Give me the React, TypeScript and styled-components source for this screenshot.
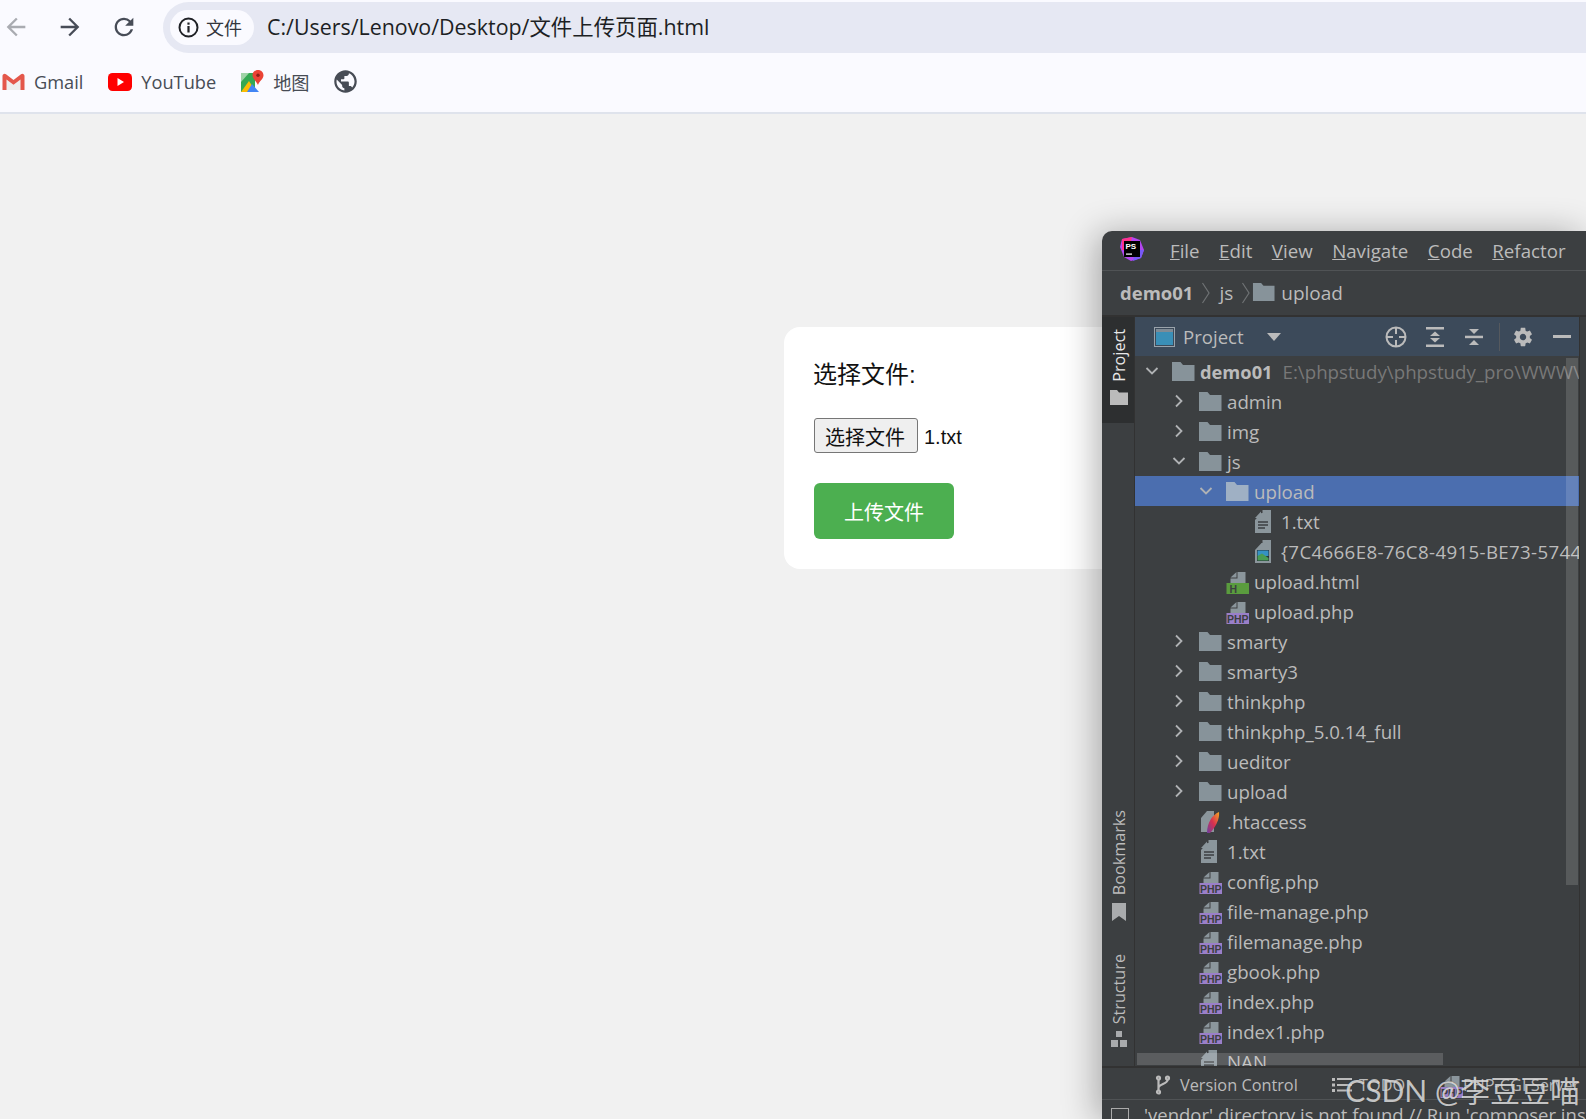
import React from 'react';
import styled, { createGlobalStyle } from 'styled-components';

const Global = createGlobalStyle`
  html, body { margin: 0; padding: 0; background: #f1f1f1; }
  body { width: 1586px; height: 1119px; overflow: hidden; font-family: "Open Sans", "Noto Sans CJK SC", sans-serif; }
  #root { height: 100%; }
`;

const Shell = styled.div`
  height: 1119px;
  display: flex;
  flex-direction: column;
  overflow: hidden;
`;

const BrowserBar = styled.header`
  height: 114px;
  flex: none;
  box-sizing: border-box;
  background: #fafaff;
  border-bottom: 2px solid #dfe3ec;
  display: flex;
  flex-direction: column;
`;

const NavRow = styled.div`
  height: 53px;
  padding: 1px 0 0 2px;
  box-sizing: border-box;
  display: flex;
  align-items: center;
  gap: 26px;
`;

const NavButton = styled.span<{ $color: string }>`
  width: 28px;
  height: 28px;
  margin-top: -1px;
  color: ${p => p.$color};
  display: flex;
  align-items: center;
  justify-content: center;
`;

const AddressPill = styled.div`
  flex: 1;
  height: 51px;
  margin-left: -1px;
  border-radius: 26px 0 0 26px;
  background: #e6e8f3;
  display: flex;
  align-items: center;
  padding-left: 7px;
`;

const SecurityChip = styled.div`
  width: 84px;
  height: 35px;
  box-sizing: border-box;
  padding-left: 8px;
  border-radius: 18px;
  background: #fafaff;
  display: flex;
  align-items: center;
  gap: 7px;
  font-size: 18px;
  color: #34373d;
`;

const Url = styled.span`
  margin: -3px 0 0 13px;
  font-size: 21.4px;
  color: #1d1f24;
`;

const BookmarkRow = styled.nav`
  flex: 1;
  display: flex;
  align-items: center;
  padding: 0 0 2px 2px;
  gap: 25px;
`;

const Bookmark = styled.span`
  display: flex;
  align-items: center;
  gap: 9px;
  font-size: 18.2px;
  color: #474c55;
`;

const GlobeSlot = styled.span`
  display: flex;
  margin-left: -3px;
`;

const PageArea = styled.main`
  flex: 1;
  position: relative;
  min-height: 0;
`;

const UploadCard = styled.section`
  width: 440px;
  margin: 213px 0 0 784px;
  box-sizing: border-box;
  padding: 30px;
  background: #fff;
  border-radius: 16px;
  font-family: "Liberation Sans", "Noto Sans CJK SC", sans-serif;
  color: #111;
`;

const FieldLabel = styled.div`
  font-size: 24px;
  line-height: 36px;
  margin-bottom: 25px;
  margin-left: -1px;
`;

const FileRow = styled.div`
  display: flex;
  align-items: center;
  height: 35px;
  margin-bottom: 30px;
  gap: 6px;
  font-size: 20px;
`;

const FileButton = styled.span`
  width: 104px;
  height: 35px;
  box-sizing: border-box;
  padding: 2px 2px 0 0;
  border: 1px solid #767676;
  border-radius: 3px;
  background: #efefef;
  display: flex;
  align-items: center;
  justify-content: center;
`;

const FileName = styled.span`
  padding-top: 3px;
`;

const SubmitButton = styled.span`
  width: 140px;
  height: 56px;
  border-radius: 6px;
  background: #4caf50;
  color: #fff;
  font-size: 20px;
  display: flex;
  align-items: center;
  justify-content: center;
`;

const IdeWindow = styled.div`
  position: absolute;
  left: 1102px;
  top: 117px;
  right: 0;
  bottom: 0;
  border-top-left-radius: 10px;
  background: #3c3f41;
  box-shadow: -6px 2px 34px rgba(0, 0, 0, 0.3);
  display: flex;
  flex-direction: column;
  overflow: hidden;
  color: #bbbbbb;
  font-family: "Open Sans", sans-serif;
`;

const MenuBar = styled.div`
  height: 40px;
  flex: none;
  box-sizing: border-box;
  border-bottom: 1px solid #505355;
  display: flex;
  align-items: center;
  padding-left: 17px;
  font-size: 18.7px;
  white-space: nowrap;
`;

const LogoSlot = styled.span`
  width: 26px;
  height: 26px;
  flex: none;
  margin-top: -3px;
`;

const MenuList = styled.div`
  display: flex;
  gap: 19.5px;
  margin-left: 25px;
`;

const MenuItem = styled.span`
  &::first-letter { text-decoration: underline; }
`;

const Crumbs = styled.div`
  height: 46px;
  flex: none;
  box-sizing: border-box;
  border-bottom: 2px solid #323232;
  display: flex;
  align-items: center;
  padding-left: 18px;
  font-size: 19px;
`;

const CrumbStrong = styled.strong`
  font-size: 18.5px;
  font-weight: 700;
  margin-top: -1px;
`;

const CrumbSep = styled.span<{ $tight?: boolean }>`
  margin: 0 ${p => (p.$tight ? '1px' : '8px')} 0 8px;
  display: flex;
  color: #6f7274;
`;

const CrumbFolder = styled.span`
  display: flex;
  margin-right: 6px;
  margin-top: -4px;
`;

const MainRow = styled.div`
  flex: 1;
  min-height: 0;
  display: flex;
`;

const ToolStrip = styled.aside`
  width: 33px;
  flex: none;
  box-sizing: border-box;
  border-right: 1px solid #323232;
  display: flex;
  flex-direction: column;
  align-items: center;
  padding-bottom: 19px;
`;

const StripTab = styled.div<{ $active?: boolean; $push?: boolean }>`
  width: 100%;
  display: flex;
  flex-direction: column;
  align-items: center;
  gap: 7px;
  box-sizing: border-box;
  background: ${p => (p.$active ? '#2d2f30' : 'transparent')};
  color: ${p => (p.$active ? '#e8e8e8' : '#bbbbbb')};
  padding: ${p => (p.$active ? '12px 0 18px 2px' : '0 0 0 2px')};
  margin-top: ${p => (p.$push ? 'auto' : '0')};
`;

const StripLabel = styled.span`
  writing-mode: vertical-rl;
  transform: rotate(180deg);
  font-size: 16.2px;
  line-height: 20px;
`;

const StripGap = styled.div`
  height: 33px;
  flex: none;
`;

const ProjectPanel = styled.section`
  flex: 1;
  min-width: 0;
  position: relative;
  display: flex;
  flex-direction: column;
  overflow: hidden;
`;

const PanelHead = styled.div`
  height: 39px;
  flex: none;
  background: #3c4a5a;
  display: flex;
  align-items: center;
  padding-left: 19px;
  font-size: 18.6px;
`;

const ProjectGlyph = styled.span`
  width: 21px;
  height: 20px;
  flex: none;
`;

const HeadTitle = styled.span`
  margin: -1px 0 0 8px;
`;

const HeadCaret = styled.span`
  width: 0;
  height: 0;
  flex: none;
  margin-left: 23px;
  margin-right: 103px;
  border-left: 7px solid transparent;
  border-right: 7px solid transparent;
  border-top: 8px solid #bbbbbb;
`;

const HeadTools = styled.div`
  display: flex;
  flex: none;
  align-items: center;
  gap: 15px;
`;

const HeadDivider = styled.span`
  width: 1px;
  height: 28px;
  margin: 0 -3px 0 -2px;
  background: #55595e;
`;

const HeadMinus = styled.span`
  width: 20px;
  height: 4px;
  margin-left: 4px;
  display: flex;
`;

const Tree = styled.div`
  flex: 1;
  overflow: hidden;
`;

const Row = styled.div<{ $depth: number; $selected?: boolean }>`
  height: 30px;
  display: flex;
  align-items: center;
  padding-left: ${p => p.$depth * 27 + 8}px;
  background: ${p => (p.$selected ? '#4b6eaf' : 'transparent')};
  font-size: 18.7px;
  white-space: nowrap;
`;

const Twisty = styled.span`
  width: 18px;
  height: 18px;
  flex: none;
  margin-right: 10px;
  display: flex;
  align-items: center;
  justify-content: center;
`;

const NodeIcon = styled.span`
  width: 24px;
  height: 26px;
  flex: none;
  margin-right: 5px;
  display: flex;
`;

const NodeName = styled.span<{ $bold?: boolean; $wide?: boolean }>`
  padding-top: 1px;
  font-weight: ${p => (p.$bold ? 700 : 400)};
  font-size: ${p => (p.$bold ? '18.3px' : 'inherit')};
  letter-spacing: ${p => (p.$wide ? '0.35px' : 'normal')};
`;

const NodePath = styled.span`
  margin-left: 10px;
  padding-top: 1px;
  color: #787878;
`;

const VerticalThumb = styled.div`
  position: absolute;
  right: 1px;
  top: 41px;
  width: 12px;
  height: 527px;
  background: rgba(255, 255, 255, 0.14);
`;

const HorizontalThumb = styled.div`
  position: absolute;
  left: 2px;
  bottom: 1px;
  width: 306px;
  height: 12px;
  background: rgba(255, 255, 255, 0.16);
`;

const RightEdge = styled.div`
  width: 6px;
  flex: none;
  border-left: 1px solid #323232;
  background: #3a3d3f;
`;

const BottomTools = styled.div`
  height: 34px;
  flex: none;
  box-sizing: border-box;
  border-top: 2px solid #323232;
  border-bottom: 1px solid #505355;
  display: flex;
  align-items: center;
  padding: 3px 0 0 53px;
  font-size: 16.3px;
  white-space: nowrap;
`;

const ToolButton = styled.span<{ $width: number; $gap: number }>`
  width: ${p => p.$width}px;
  flex: none;
  display: flex;
  align-items: center;
  gap: ${p => p.$gap}px;
`;

const StatusLine = styled.div`
  height: 19px;
  flex: none;
  box-sizing: border-box;
  display: flex;
  align-items: flex-start;
  padding: 3px 0 0 9px;
  font-size: 18.5px;
  line-height: 24px;
  white-space: nowrap;
  overflow: hidden;
`;

const StatusBox = styled.span`
  width: 18px;
  height: 18px;
  flex: none;
  margin: 5px 15px 0 0;
  border: 1.5px solid #aaa;
  box-sizing: border-box;
`;

const Watermark = styled.div`
  position: absolute;
  right: 6px;
  bottom: 11px;
  font-family: "Lato", "Noto Sans CJK SC", sans-serif;
  font-size: 30px;
  line-height: 36px;
  color: rgba(255, 255, 255, 0.72);
  text-shadow: 0 0 1px rgba(30, 30, 30, 0.6);
  white-space: nowrap;
`;

const FolderIcon = ({ color = '#87939a', w = 24, h = 26 }: { color?: string; w?: number; h?: number }) => (
  <svg width={w} height={h} viewBox="0 0 24 26">
    <path d="M1 4 H9.5 L12 7 H23.5 V23 H1 Z" fill={color} />
  </svg>
);

const DocBase = () => (
  <g fill="#8b969c">
    <path d="M4 15 V10.5 H11 V4 H19 V15 Z" />
    <path d="M4 9.5 L10 4 V9.5 Z" />
  </g>
);

const PhpIcon = () => (
  <svg width="24" height="26" viewBox="-1.5 0 24 26">
    <DocBase />
    <rect x="0" y="15" width="22.5" height="11" fill="#9a7fc9" />
    <text x="0.5" y="24.5" fontFamily="Liberation Sans, sans-serif" fontSize="10.5" fontWeight="700" fill="#3c3f41" textLength="21.5">PHP</text>
  </svg>
);

const HtmlIcon = () => (
  <svg width="24" height="26" viewBox="-1.5 0 24 26">
    <DocBase />
    <rect x="0" y="15" width="22.5" height="11" fill="#5a9c3e" />
    <text x="3" y="24.5" fontFamily="Liberation Sans, sans-serif" fontSize="10.5" fontWeight="700" fill="#3c3f41">H</text>
  </svg>
);

const TextIcon = () => (
  <svg width="24" height="26" viewBox="0 0 24 26">
    <path d="M3 12 L9.5 5 H10.5 V2 H19 V25 H3 Z" fill="#8b969c" />
    <path d="M3 10 L9 3.5 V10 Z" fill="#8b969c" />
    <path d="M6 14 H16 M6 17 H16 M6 20 H13" stroke="#3c3f41" strokeWidth="1.6" />
  </svg>
);

const ImageIcon = () => (
  <svg width="24" height="26" viewBox="0 0 24 26">
    <path d="M3 12 L9.5 5 H10.5 V2 H19 V25 H3 Z" fill="#8b969c" />
    <rect x="5" y="12" width="12" height="11" fill="#27333a" />
    <path d="M5.5 12.5 H16.5 V18 H5.5 Z" fill="#3592c4" />
    <path d="M5.5 22.5 V18 L10 15.5 L16.5 20 V22.5 Z" fill="#499c54" />
  </svg>
);

const ApacheIcon = () => (
  <svg width="24" height="26" viewBox="0 0 24 26">
    <defs>
      <linearGradient id="feather" x1="1" y1="0" x2="0" y2="1">
        <stop offset="0" stopColor="#f5a623" />
        <stop offset=".5" stopColor="#d9304f" />
        <stop offset="1" stopColor="#6a3fa0" />
      </linearGradient>
    </defs>
    <path d="M3 10 L9 3 H16 V24 H3 Z" fill="#8b969c" />
    <path d="M9 25 C9 15 14 7 21 4 C22 11 17 20 12 25 Z" fill="url(#feather)" />
  </svg>
);

const Chevron = ({ open, color = '#b0b2b4' }: { open: boolean; color?: string }) => (
  <svg width="16" height="16" viewBox="0 0 16 16">
    <path d={open ? 'M2.5 5 L8 10.5 L13.5 5' : 'M5 2.5 L10.5 8 L5 13.5'} fill="none" stroke={color} strokeWidth="1.8" />
  </svg>
);

const PsLogo = () => (
  <svg width="26" height="26" viewBox="0 0 26 26">
    <path d="M3 3 L13 1 L21 4 L25 14 L22 22 L12 25 L5 21 L1 11 Z" fill="#b345f1" />
    <path d="M3 3 L13 1 L10 14 L3 14 Z" fill="#ff318c" />
    <path d="M14 25 L22 22 L25 14 L16 14 Z" fill="#765af8" />
    <rect x="5" y="5" width="16" height="16" fill="#000" />
    <text x="6.5" y="13" fontFamily="Liberation Sans, sans-serif" fontSize="8" fontWeight="700" fill="#fff">PS</text>
    <rect x="7" y="17.5" width="6" height="1.2" fill="#fff" />
  </svg>
);

const CrumbChevron = () => (
  <svg width="10" height="24" viewBox="0 0 10 24">
    <path d="M1.5 2 L8 12 L1.5 22" fill="none" stroke="currentColor" strokeWidth="1.2" />
  </svg>
);

const nodes: { name: string; depth: number; kind: string; open?: boolean; selected?: boolean; bold?: boolean; wide?: boolean; path?: string }[] = [
  { name: 'demo01', depth: 0, kind: 'folder', open: true, bold: true, path: 'E:\\phpstudy\\phpstudy_pro\\WWW\\demo01' },
  { name: 'admin', depth: 1, kind: 'folder', open: false },
  { name: 'img', depth: 1, kind: 'folder', open: false },
  { name: 'js', depth: 1, kind: 'folder', open: true },
  { name: 'upload', depth: 2, kind: 'folder', open: true, selected: true },
  { name: '1.txt', depth: 3, kind: 'text' },
  { name: '{7C4666E8-76C8-4915-BE73-5744', depth: 3, kind: 'image', wide: true },
  { name: 'upload.html', depth: 2, kind: 'html' },
  { name: 'upload.php', depth: 2, kind: 'php' },
  { name: 'smarty', depth: 1, kind: 'folder', open: false },
  { name: 'smarty3', depth: 1, kind: 'folder', open: false },
  { name: 'thinkphp', depth: 1, kind: 'folder', open: false },
  { name: 'thinkphp_5.0.14_full', depth: 1, kind: 'folder', open: false },
  { name: 'ueditor', depth: 1, kind: 'folder', open: false },
  { name: 'upload', depth: 1, kind: 'folder', open: false },
  { name: '.htaccess', depth: 1, kind: 'apache' },
  { name: '1.txt', depth: 1, kind: 'text' },
  { name: 'config.php', depth: 1, kind: 'php' },
  { name: 'file-manage.php', depth: 1, kind: 'php' },
  { name: 'filemanage.php', depth: 1, kind: 'php' },
  { name: 'gbook.php', depth: 1, kind: 'php' },
  { name: 'index.php', depth: 1, kind: 'php' },
  { name: 'index1.php', depth: 1, kind: 'php' },
  { name: 'NAN', depth: 1, kind: 'text' },
];

const nodeIcon = (kind: string, selected?: boolean) => {
  if (kind === 'folder') return <FolderIcon color={selected ? '#9fb0c4' : '#87939a'} />;
  if (kind === 'text') return <TextIcon />;
  if (kind === 'image') return <ImageIcon />;
  if (kind === 'html') return <HtmlIcon />;
  if (kind === 'apache') return <ApacheIcon />;
  return <PhpIcon />;
};

const menus = ['File', 'Edit', 'View', 'Navigate', 'Code', 'Refactor'];

export default function App() {
  return (
    <Shell>
      <Global />
      <BrowserBar>
        <NavRow>
          <NavButton $color="#a9abb1">
            <svg width="28" height="28" viewBox="0 0 24 24" fill="currentColor"><path d="M20 11H7.83l5.59-5.59L12 4l-8 8 8 8 1.41-1.41L7.83 13H20v-2z" /></svg>
          </NavButton>
          <NavButton $color="#474c57">
            <svg width="28" height="28" viewBox="0 0 24 24" fill="currentColor"><path d="M4 11h12.17l-5.59-5.59L12 4l8 8-8 8-1.41-1.41L16.17 13H4v-2z" /></svg>
          </NavButton>
          <NavButton $color="#474c57">
            <svg width="30" height="30" viewBox="0 0 24 24" fill="currentColor"><path d="M17.65 6.35A7.958 7.958 0 0 0 12 4c-4.42 0-7.99 3.58-7.99 8s3.57 8 7.99 8c3.73 0 6.84-2.55 7.73-6h-2.08A5.99 5.99 0 0 1 12 18c-3.31 0-6-2.69-6-6s2.69-6 6-6c1.66 0 3.14.69 4.22 1.78L13 11h7V4l-2.35 2.35z" /></svg>
          </NavButton>
          <AddressPill>
            <SecurityChip>
              <svg width="21" height="21" viewBox="0 0 21 21">
                <circle cx="10.5" cy="10.5" r="9" fill="none" stroke="#1f2126" strokeWidth="2" />
                <rect x="9.4" y="9" width="2.2" height="6.5" fill="#1f2126" />
                <rect x="9.4" y="5.5" width="2.2" height="2.2" fill="#1f2126" />
              </svg>
              文件
            </SecurityChip>
            <Url>C:/Users/Lenovo/Desktop/文件上传页面.html</Url>
          </AddressPill>
        </NavRow>
        <BookmarkRow>
          <Bookmark>
            <svg width="23" height="18" viewBox="0 0 23 18">
              <path d="M2 2 L11.5 9.5 L21 2 V17 H2 Z" fill="#eeeeee" />
              <path d="M0.5 3 C0.5 1 2.5 0 4 1.2 L11.5 7 L19 1.2 C20.5 0 22.5 1 22.5 3 V17 H18.5 V6.5 L11.5 11.8 L4.5 6.5 V17 H0.5 Z" fill="#e4574b" />
            </svg>
            Gmail
          </Bookmark>
          <Bookmark>
            <svg width="24" height="18" viewBox="0 0 24 18">
              <rect width="24" height="18" rx="4.5" fill="#ff0000" />
              <path d="M9.5 5 L16 9 L9.5 13 Z" fill="#fff" />
            </svg>
            YouTube
          </Bookmark>
          <Bookmark>
            <svg width="23" height="23" viewBox="0 0 23 23">
              <path d="M0 3 H14 V22 H0 Z" fill="#34a853" />
              <path d="M0 22 L8 11 L15 22 Z" fill="#fbbc04" />
              <path d="M6 22 L11 14 L18 22 Z" fill="#4285f4" />
              <path d="M0 3 H8 L0 12 Z" fill="#9fd3a7" />
              <path d="M17 0 C20 0 22.5 2.2 22.5 5.3 C22.5 9 18.5 11 17 15 C15.5 11 11.5 9 11.5 5.3 C11.5 2.2 14 0 17 0 Z" fill="#ea4335" />
              <circle cx="17" cy="5.3" r="1.7" fill="#8f2018" />
            </svg>
            地图
          </Bookmark>
          <GlobeSlot>
            <svg width="27" height="27" viewBox="0 0 24 24" fill="#474c55">
              <path d="M12 2C6.48 2 2 6.48 2 12s4.48 10 10 10 10-4.48 10-10S17.52 2 12 2zm-1 17.93c-3.95-.49-7-3.85-7-7.93 0-.62.08-1.21.21-1.79L9 15v1c0 1.1.9 2 2 2v1.93zm6.9-2.54c-.26-.81-1-1.39-1.9-1.39h-1v-3c0-.55-.45-1-1-1H8v-2h2c.55 0 1-.45 1-1V7h2c1.1 0 2-.9 2-2v-.41c2.93 1.19 5 4.06 5 7.41 0 2.08-.8 3.97-2.1 5.39z" />
            </svg>
          </GlobeSlot>
        </BookmarkRow>
      </BrowserBar>
      <PageArea>
        <UploadCard>
          <FieldLabel>选择文件:</FieldLabel>
          <FileRow>
            <FileButton>选择文件</FileButton>
            <FileName>1.txt</FileName>
          </FileRow>
          <SubmitButton>上传文件</SubmitButton>
        </UploadCard>
        <IdeWindow>
          <MenuBar>
            <LogoSlot><PsLogo /></LogoSlot>
            <MenuList>
              {menus.map(m => <MenuItem key={m}>{m}</MenuItem>)}
            </MenuList>
          </MenuBar>
          <Crumbs>
            <CrumbStrong>demo01</CrumbStrong>
            <CrumbSep><CrumbChevron /></CrumbSep>
            js
            <CrumbSep $tight><CrumbChevron /></CrumbSep>
            <CrumbFolder><FolderIcon w={23} h={25} /></CrumbFolder>
            upload
          </Crumbs>
          <MainRow>
            <ToolStrip>
              <StripTab $active>
                <StripLabel>Project</StripLabel>
                <svg width="18" height="16" viewBox="0 0 18 16"><path d="M0 1 H7 L9 3.5 H18 V16 H0 Z" fill="#bbbbbb" /></svg>
              </StripTab>
              <StripTab $push>
                <StripLabel>Bookmarks</StripLabel>
                <svg width="14" height="18" viewBox="0 0 14 18"><path d="M0 0 H14 V18 L7 13 L0 18 Z" fill="#a9abad" /></svg>
              </StripTab>
              <StripGap />
              <StripTab>
                <StripLabel>Structure</StripLabel>
                <svg width="16" height="16" viewBox="0 0 16 16" fill="#a9abad">
                  <rect x="5" y="0" width="6" height="6" />
                  <rect x="0" y="9" width="7" height="7" />
                  <rect x="9" y="9" width="7" height="7" />
                </svg>
              </StripTab>
            </ToolStrip>
            <ProjectPanel>
              <PanelHead>
                <ProjectGlyph>
                  <svg width="21" height="20" viewBox="0 0 21 20">
                    <rect x="0.5" y="0.5" width="20" height="19" fill="none" stroke="#9aa3ab" />
                    <rect x="2" y="2" width="17" height="3" fill="#7f8b95" />
                    <rect x="2" y="5" width="17" height="13" fill="#3a8fb7" />
                  </svg>
                </ProjectGlyph>
                <HeadTitle>Project</HeadTitle>
                <HeadCaret />
                <HeadTools>
                  <svg width="24" height="24" viewBox="0 0 24 24" fill="none" stroke="#bbbbbb" strokeWidth="2">
                    <circle cx="12" cy="12" r="9.5" />
                    <path d="M12 2.5 V9 M12 15 V21.5 M2.5 12 H9 M15 12 H21.5" />
                  </svg>
                  <svg width="24" height="24" viewBox="0 0 24 24" fill="#bbbbbb">
                    <rect x="3" y="2" width="18" height="2.5" />
                    <rect x="3" y="19.5" width="18" height="2.5" />
                    <path d="M12 6.5 L17 11 H7 Z" />
                    <path d="M12 17.5 L7 13 H17 Z" />
                  </svg>
                  <svg width="24" height="24" viewBox="0 0 24 24" fill="#bbbbbb">
                    <rect x="3" y="10.7" width="18" height="2.5" />
                    <path d="M12 9 L7 4 H17 Z" />
                    <path d="M12 15 L17 20 H7 Z" />
                  </svg>
                  <HeadDivider />
                  <svg width="22" height="22" viewBox="0 0 24 24" fill="#bbbbbb">
                    <path d="M19.43 12.98c.04-.32.07-.64.07-.98s-.03-.66-.07-.98l2.11-1.65c.19-.15.24-.42.12-.64l-2-3.46c-.12-.22-.39-.3-.61-.22l-2.49 1c-.52-.4-1.08-.73-1.69-.98l-.38-2.65C14.46 2.18 14.25 2 14 2h-4c-.25 0-.46.18-.49.42l-.38 2.65c-.61.25-1.17.59-1.69.98l-2.49-1c-.23-.09-.49 0-.61.22l-2 3.46c-.13.22-.07.49.12.64l2.11 1.65c-.04.32-.07.65-.07.98s.03.66.07.98l-2.11 1.65c-.19.15-.24.42-.12.64l2 3.46c.12.22.39.3.61.22l2.49-1c.52.4 1.08.73 1.69.98l.38 2.65c.03.24.24.42.49.42h4c.25 0 .46-.18.49-.42l.38-2.65c.61-.25 1.17-.59 1.69-.98l2.49 1c.23.09.49 0 .61-.22l2-3.46c.12-.22.07-.49-.12-.64l-2.11-1.65zM12 15.5c-1.93 0-3.5-1.57-3.5-3.5s1.57-3.5 3.5-3.5 3.5 1.57 3.5 3.5-1.57 3.5-3.5 3.5z" />
                  </svg>
                  <HeadMinus>
                    <svg width="20" height="4" viewBox="0 0 20 4"><rect width="18" height="3" fill="#bbbbbb" /></svg>
                  </HeadMinus>
                </HeadTools>
              </PanelHead>
              <Tree>
                {nodes.map((n, i) => (
                  <Row key={i} $depth={n.depth} $selected={n.selected}>
                    <Twisty>{n.open !== undefined && <Chevron open={n.open} />}</Twisty>
                    <NodeIcon>{nodeIcon(n.kind, n.selected)}</NodeIcon>
                    <NodeName $bold={n.bold} $wide={n.wide}>{n.name}</NodeName>
                    {n.path && <NodePath>{n.path}</NodePath>}
                  </Row>
                ))}
              </Tree>
              <VerticalThumb />
              <HorizontalThumb />
            </ProjectPanel>
            <RightEdge />
          </MainRow>
          <BottomTools>
            <ToolButton $width={177} $gap={9}>
              <svg width="16" height="20" viewBox="0 0 16 20" fill="none" stroke="#bbbbbb" strokeWidth="2.2">
                <circle cx="3.5" cy="3" r="1.5" />
                <circle cx="3.5" cy="17" r="1.5" />
                <circle cx="12.5" cy="3" r="1.5" />
                <path d="M3.5 5 V15 M12.5 5 C12.5 9 3.5 9 3.5 13" />
              </svg>
              Version Control
            </ToolButton>
            <ToolButton $width={107} $gap={7}>
              <svg width="20" height="16" viewBox="0 0 20 16" fill="#bbbbbb">
                <path d="M0 1 H3 V4 H0 Z M5 1 H20 V3 H5 Z M0 6.5 H3 V9.5 H0 Z M5 7 H20 V9 H5 Z M0 12 H3 V15 H0 Z M5 12.5 H20 V14.5 H5 Z" />
              </svg>
              TODO
            </ToolButton>
            <ToolButton $width={170} $gap={0}>
              <PhpIcon />
              PHP-CGI Server
            </ToolButton>
          </BottomTools>
          <StatusLine>
            <StatusBox />
            'vendor' directory is not found // Run 'composer install' to install dependencies
          </StatusLine>
          <Watermark>CSDN @李豆豆喵</Watermark>
        </IdeWindow>
      </PageArea>
    </Shell>
  );
}
